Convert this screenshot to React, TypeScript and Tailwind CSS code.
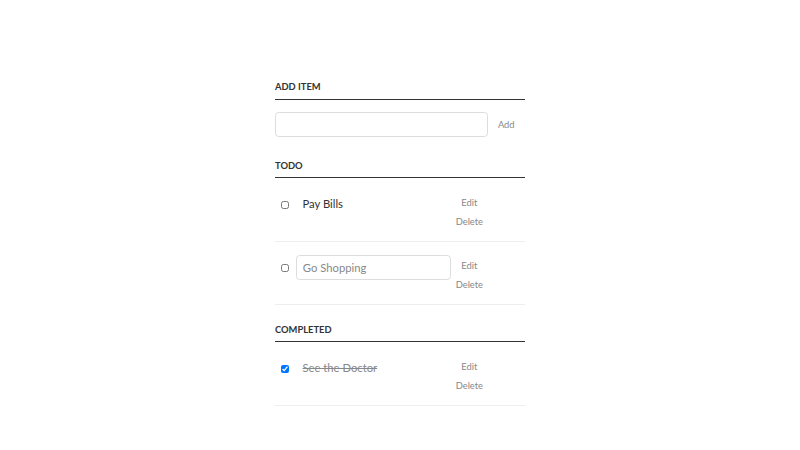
import React from "react";

function Heading({ children }: { children: React.ReactNode }) {
  return (
    <div className="pt-[18.75px] pb-[6.25px] text-[9.375px] leading-[11.25px] font-bold uppercase text-[#333] border-b border-[#333]">
      {children}
    </div>
  );
}

function Item({
  label,
  editing,
  done,
}: {
  label: string;
  editing?: boolean;
  done?: boolean;
}) {
  return (
    <li className="flex py-[12.5px] border-b border-[#eee] list-none">
      <div className="w-[20.6px] flex justify-center">
        <input
          type="checkbox"
          defaultChecked={done}
          className="w-[8px] h-[8px] m-0 mt-[10px]"
        />
      </div>
      <div className="w-[155px] h-[25px]">
        {editing ? (
          <input
            type="text"
            defaultValue={label}
            className="w-[155px] h-[25px] border border-[#ddd] rounded-[3.75px] px-[6.25px] text-[11.25px] text-[#888] bg-white outline-none"
          />
        ) : (
          <div
            className={
              "pl-[6.875px] text-[11.25px] leading-[25px] " +
              (done ? "line-through text-[#888]" : "text-[#333]")
            }
          >
            {label}
          </div>
        )}
      </div>
      <div className="w-[37.5px] flex flex-col">
        <button className="mt-[6.25px] h-[12.5px] text-[9.375px] leading-[12.5px] text-[#888] text-center">
          Edit
        </button>
        <button className="mt-[6.25px] h-[12.5px] text-[9.375px] leading-[12.5px] text-[#888] text-center">
          Delete
        </button>
      </div>
    </li>
  );
}

export default function App() {
  return (
    <div className="min-h-[450px] bg-white font-['Lato',sans-serif] text-[#333]">
      <div className="mx-auto w-[250px] pt-[62.5px]">
        <div className="mb-[12.5px]">
          <Heading>Add Item</Heading>
        </div>
        <div className="flex mb-[3.5px]">
          <input
            type="text"
            className="w-[212.5px] h-[25px] border border-[#ddd] rounded-[3.75px] px-[6.25px] text-[11.25px] text-[#888] bg-white outline-none"
          />
          <button className="w-[37.5px] mt-[6.25px] h-[12.5px] text-[9.375px] leading-[12.5px] text-[#888] text-center">
            Add
          </button>
        </div>
        <Heading>Todo</Heading>
        <ul className="m-0 p-0">
          <Item label="Pay Bills" />
          <Item label="Go Shopping" editing />
        </ul>
        <Heading>Completed</Heading>
        <ul className="m-0 p-0">
          <Item label="See the Doctor" done />
        </ul>
      </div>
    </div>
  );
}
